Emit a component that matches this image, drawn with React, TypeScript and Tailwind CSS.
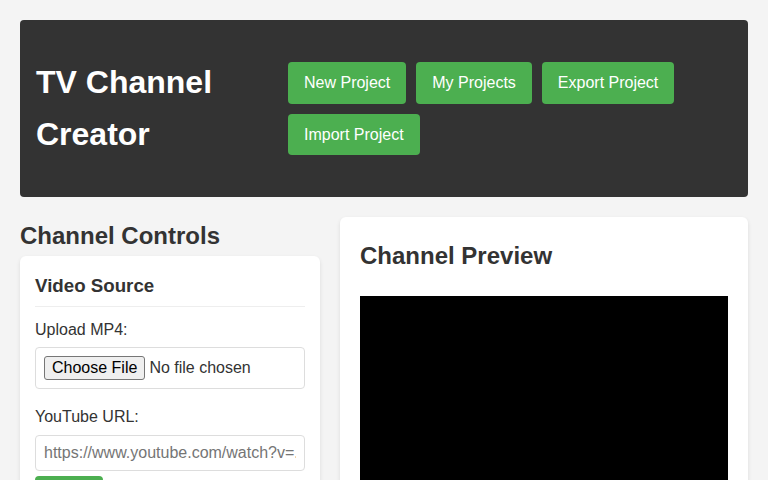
export default function App() {
  const navButtons = ['New Project', 'My Projects', 'Export Project', 'Import Project'];

  return (
    <div className="min-h-screen bg-[#f4f4f4] p-5 font-['Liberation_Sans',Arial,sans-serif] leading-[1.6] text-[#333]">
      {/* Header */}
      <header className="flex items-center rounded bg-[#333] p-4 text-white">
        <h1 className="my-[21.44px] w-[232px] shrink-0 text-[32px] font-bold leading-[1.6]">
          TV Channel Creator
        </h1>
        <nav className="ml-5 flex flex-1 flex-wrap gap-[10px]">
          {navButtons.map((label) => (
            <button
              key={label}
              className="cursor-pointer rounded bg-[#4caf50] px-4 py-2 text-base leading-[1.6] text-white"
            >
              {label}
            </button>
          ))}
        </nav>
      </header>

      {/* Main */}
      <main className="mt-5 flex gap-5">
        <section className="w-[300px] shrink-0">
          <h2 className="text-2xl font-bold leading-[1.6]">Channel Controls</h2>
          <div className="rounded-md bg-white p-[15px] shadow-[0_2px_4px_rgba(0,0,0,0.1)]">
            <h3 className="border-b border-[#eee] pb-[5px] text-[18.72px] font-bold leading-[1.6]">
              Video Source
            </h3>
            <label className="mt-[10px] mb-[5px] block">Upload MP4:</label>
            <input
              type="file"
              accept="video/mp4"
              className="block h-[42px] w-full rounded border border-[#ddd] p-2 text-base leading-[24px] file:mr-1 file:rounded-[3px] file:border file:border-[#767676] file:bg-[#efefef] file:px-[7px] file:py-px file:leading-[20px] file:text-black"
            />
            <label className="mt-[15px] mb-[5px] block">YouTube URL:</label>
            <input
              type="text"
              placeholder="https://www.youtube.com/watch?v=..."
              className="block h-9 w-full rounded border border-[#ddd] px-2 text-base placeholder:text-[#757575]"
            />
            <button className="mt-[5px] rounded bg-[#4caf50] px-4 py-2 text-white">Load</button>
          </div>
        </section>

        <section className="flex-1 rounded-md bg-white p-5 shadow-[0_2px_4px_rgba(0,0,0,0.1)]">
          <h2 className="mb-5 text-2xl font-bold leading-[1.6]">Channel Preview</h2>
          <div className="aspect-video w-full bg-black" />
        </section>
      </main>
    </div>
  );
}
